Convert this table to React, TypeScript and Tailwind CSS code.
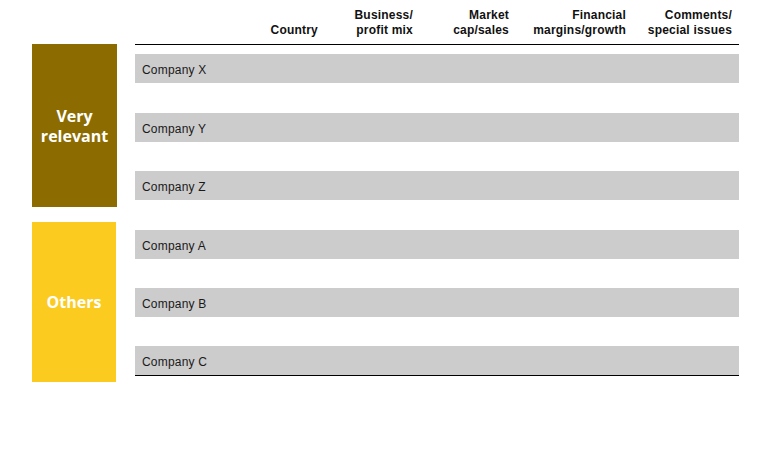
const headers = [
  { w: 'w-[183px]', lines: ['Country'] },
  { w: 'w-[95px]', lines: ['Business/', 'profit mix'] },
  { w: 'w-[96px]', lines: ['Market', 'cap/sales'] },
  { w: 'w-[117px]', lines: ['Financial', 'margins/growth'] },
  { w: 'w-[106px]', lines: ['Comments/', 'special issues'] },
];

const rows = [
  { name: 'Company X', mt: 'mt-[9px]' },
  { name: 'Company Y', mt: 'mt-[30px]' },
  { name: 'Company Z', mt: 'mt-[29px]' },
  { name: 'Company A', mt: 'mt-[30px]' },
  { name: 'Company B', mt: 'mt-[29px]' },
  { name: 'Company C', mt: 'mt-[29px]', last: true },
];

const App = () => {
  return (
    <div className="flex h-[457px] w-[761px] bg-white font-['Liberation_Sans',Arial,sans-serif]">
      {/* Category boxes */}
      <div className="ml-[32px] flex w-[85px] flex-col pt-[44px] font-['Open_Sans',sans-serif] text-[16px] font-bold leading-[20px] text-white">
        <div className="flex h-[163px] items-center justify-center bg-[#8c6c00] text-center">
          Very
          <br />
          relevant
        </div>
        <div className="mt-[15px] flex h-[160px] w-[84px] items-center justify-center bg-[#fccb1f] text-center">
          Others
        </div>
      </div>

      {/* Table */}
      <div className="ml-[18px] flex w-[604px] flex-col">
        <div className="flex h-[45px] items-end border-b border-black pb-[6px] text-[12px] font-bold leading-[15px] tracking-[0.2px] text-[#111]">
          {headers.map((h) => (
            <div key={h.lines[0]} className={`${h.w} shrink-0 text-right`}>
              {h.lines.map((l) => (
                <div key={l}>{l}</div>
              ))}
            </div>
          ))}
        </div>

        {rows.map((r) => (
          <div
            key={r.name}
            className={`${r.mt} flex items-center bg-[#cccccc] pl-[7px] pt-[2px] text-[12px] tracking-[0.2px] text-[#1a1a1a] ${
              r.last ? 'h-[30px] border-b border-black' : 'h-[29px]'
            }`}
          >
            {r.name}
          </div>
        ))}
      </div>
    </div>
  );
};

export default App;
